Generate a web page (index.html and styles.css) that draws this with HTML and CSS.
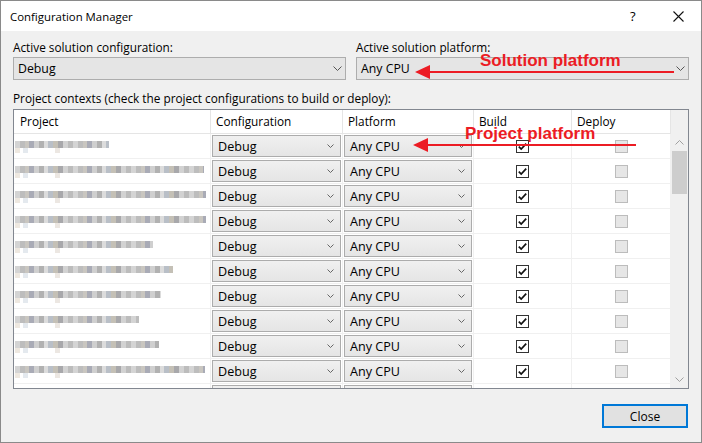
FILE: index.html
```html
<!DOCTYPE html>
<html>
<head>
<meta charset="utf-8">
<link rel="stylesheet" href="styles.css">
</head>
<body>
<div class="window">
  <div class="titlebar">
    <span class="title">Configuration Manager</span>
    <span class="help">?</span>
    <span class="closex"><svg width="11" height="11" viewBox="0 0 11 11"><path d="M0.5 0.5 L10.5 10.5 M10.5 0.5 L0.5 10.5" stroke="#111" stroke-width="1.1" fill="none"/></svg></span>
  </div>
  <div class="content">
    <div class="top">
      <div class="field">
        <div class="label">Active solution configuration:</div>
        <div class="dropdown"><span>Debug</span><svg class="chev" width="9" height="5" viewBox="0 0 9 5"><polyline points="0.5,0.5 4.5,4.5 8.5,0.5" stroke="#555" stroke-width="1" fill="none"/></svg></div>
      </div>
      <div class="field">
        <div class="label">Active solution platform:</div>
        <div class="dropdown"><span>Any CPU</span><svg class="chev" width="9" height="5" viewBox="0 0 9 5"><polyline points="0.5,0.5 4.5,4.5 8.5,0.5" stroke="#555" stroke-width="1" fill="none"/></svg></div>
      </div>
    </div>
    <div class="label ctx">Project contexts (check the project configurations to build or deploy):</div>
    <div class="grid">
      <div class="table">
        <div class="row hdr">
          <div class="hc">Project</div>
          <div class="hc">Configuration</div>
          <div class="hc">Platform</div>
          <div class="hc">Build</div>
          <div class="hc">Deploy</div>
        </div>
        <div id="rows"></div>
      </div>
      <div class="scrollbar">
        <div class="sbtn"><svg width="9" height="5" viewBox="0 0 9 5"><polyline points="0.5,4.5 4.5,0.5 8.5,4.5" stroke="#a0a0a0" stroke-width="1" fill="none"/></svg></div>
        <div class="thumb"></div>
        <div class="sfill"></div>
        <div class="sbtn"><svg width="9" height="5" viewBox="0 0 9 5"><polyline points="0.5,0.5 4.5,4.5 8.5,0.5" stroke="#a0a0a0" stroke-width="1" fill="none"/></svg></div>
      </div>
    </div>
    <div class="footer"><button class="btn">Close</button></div>
  </div>

  <div class="anno anno1">Solution platform</div>
  <div class="arrow arrow1"><div class="head"></div><div class="shaft"></div></div>
  <div class="anno anno2">Project platform</div>
  <div class="arrow arrow2"><div class="head"></div><div class="shaft"></div></div>
</div>
<script src="app.js"></script>
</body>
</html>
```
FILE: app.js
```js
var widths = [94, 189, 191, 191, 138, 158, 146, 124, 144, 190];
var html = '';
var chev = '<svg class="chev2" width="7" height="4" viewBox="0 0 7 4"><polyline points="0.5,0.5 3.5,3.5 6.5,0.5" stroke="#666" stroke-width="1" fill="none"/></svg>';
var check = '<svg width="13" height="13" viewBox="0 0 13 13"><rect x="0.5" y="0.5" width="12" height="12" fill="#fff" stroke="#333"/><path d="M2.8 6.6 L5.2 9 L10.2 3.6" stroke="#111" stroke-width="1.7" fill="none"/></svg>';
for (var i = 0; i < widths.length; i++) {
  html += '<div class="row">' +
    '<div class="c name"><div class="blur" style="width:' + widths[i] + 'px"></div></div>' +
    '<div class="c combo-cell"><div class="combo"><span>Debug</span>' + chev + '</div></div>' +
    '<div class="c combo-cell"><div class="combo"><span>Any CPU</span>' + chev + '</div></div>' +
    '<div class="c center">' + check + '</div>' +
    '<div class="c center"><div class="dis"></div></div>' +
    '</div>';
}
html += '<div class="row"><div class="c"></div><div class="c combo-cell"><div class="combo"></div></div><div class="c combo-cell"><div class="combo"></div></div><div class="c"></div><div class="c"></div></div>';
document.getElementById('rows').innerHTML = html;
```
FILE: styles.css
```css
* { box-sizing: border-box; }
html, body { margin: 0; padding: 0; }
body {
  font-family: "Open Sans", "Liberation Sans", Arial, sans-serif;
  font-size: 11.8px;
  color: #000;
  background: #fff;
}
.window {
  position: relative;
  width: 702px;
  height: 443px;
  border: 1px solid #8a8a8a;
  background: #f0f0f0;
  display: flex;
  flex-direction: column;
  overflow: hidden;
}
.titlebar {
  height: 30px;
  background: #fff;
  display: flex;
  align-items: center;
  padding-left: 9px;
}
.title { flex: 1; font-size: 11.4px; }
.help { width: 10px; margin-right: 33px; font-size: 13px; }
.closex { width: 11px; margin-right: 17px; display: flex; }
.content {
  flex: 1;
  padding: 9px 12px 0 12px;
  display: flex;
  flex-direction: column;
}
.top { display: grid; grid-template-columns: 333px 333px; column-gap: 10px; }
.label { line-height: 15px; height: 15px; }
.dropdown {
  margin-top: 2px;
  height: 23px;
  border: 1px solid #adadad;
  background: #e5e5e5;
  display: flex;
  align-items: center;
  padding-left: 4px;
  padding-right: 3px;
  font-size: 12.3px;
}
.dropdown span { flex: 1; }
.ctx { margin-top: 11px; }
.grid {
  margin-top: 3px;
  height: 280px;
  border: 1px solid #828790;
  background: #fff;
  display: flex;
}
.table { flex: 1; overflow: hidden; }
.row {
  display: grid;
  grid-template-columns: 197px 132px 131px 98px 99px;
  height: 25px;
  border-bottom: 1px solid #f0f0f0;
}
.hdr { height: 24px; border-bottom: 1px solid #e5e5e5; }
.hc {
  border-right: 1px solid #e5e5e5;
  padding-left: 5px;
  line-height: 23px;
}
.hdr .hc:first-child { padding-left: 6px; }
.c { border-right: 1px solid #f0f0f0; }
.name { display: flex; align-items: center; }
.blur {
  height: 12px;
  margin-top: 2px;
  margin-left: 1px;
  background:
    linear-gradient(90deg, #d4d4d4 0 5px, #bdbdbd 5px 10px, #c9c6c0 10px 14px, #a9abb6 14px 19px, #cfcfcf 19px 24px, #b1b1b1 24px 29px, #dcdcdc 29px 33px, #b9bfc7 33px 38px, #c4c0b6 38px 43px, #a8a8ab 43px 48px, #d2d2d2 48px 53px, #bcbcbc 53px 58px) 0 0 / 58px 7px repeat-x,
    linear-gradient(90deg, #eee8e0 0 5px, #fff 5px 8px, #e4e9ee 8px 13px, #fff 13px 40px, #ece7e2 40px 45px, #fff 45px 60px) 0 7px / 60px 5px no-repeat,
    linear-gradient(#fff, #fff);
}
.combo-cell { padding: 1px 1px 0 1px; }
.combo {
  height: 22px;
  border: 1px solid #acacac;
  background: linear-gradient(#f0f0f0, #e5e5e5);
  display: flex;
  align-items: center;
  padding-left: 5px;
  padding-right: 6px;
  font-size: 12.6px;
}
.combo span { flex: 1; }
.center { display: flex; align-items: center; justify-content: center; }
.center svg { display: block; }
.dis {
  width: 13px;
  height: 13px;
  border: 1px solid #bcbcbc;
  background: #e6e6e6;
}
.scrollbar {
  width: 17px;
  background: #f0f0f0;
  display: flex;
  flex-direction: column;
  align-items: center;
  padding-top: 24px;
}
.sbtn { height: 17px; width: 17px; display: flex; align-items: center; justify-content: center; flex: none; }
.sbtn svg { display: block; }
.thumb { width: 15px; height: 43px; background: #cdcdcd; flex: none; }
.sfill { flex: 1; }
.footer {
  display: flex;
  justify-content: flex-end;
  margin-top: 15px;
  padding-right: 1px;
}
.btn {
  width: 86px;
  height: 24px;
  border: 2px solid #0078d7;
  background: #e1e1e1;
  font-family: "Open Sans", "Liberation Sans", Arial, sans-serif;
  font-size: 12px;
  padding: 0;
}
.anno {
  position: absolute;
  color: #ec1c24;
  font-family: "Liberation Sans", Arial, sans-serif;
  font-weight: bold;
  font-size: 17px;
  line-height: 20px;
}
.anno1 { left: 479px; top: 50px; }
.anno2 { left: 464px; top: 123px; }
.arrow { position: absolute; display: flex; align-items: center; }
.head {
  width: 0; height: 0;
  border-top: 7px solid transparent;
  border-bottom: 7px solid transparent;
  border-right: 15px solid #ec1c24;
}
.shaft { height: 2px; background: #ec1c24; flex: 1; }
.arrow1 { left: 414px; top: 64px; width: 259px; height: 14px; }
.arrow2 { left: 412px; top: 137px; width: 223px; height: 14px; }
```
